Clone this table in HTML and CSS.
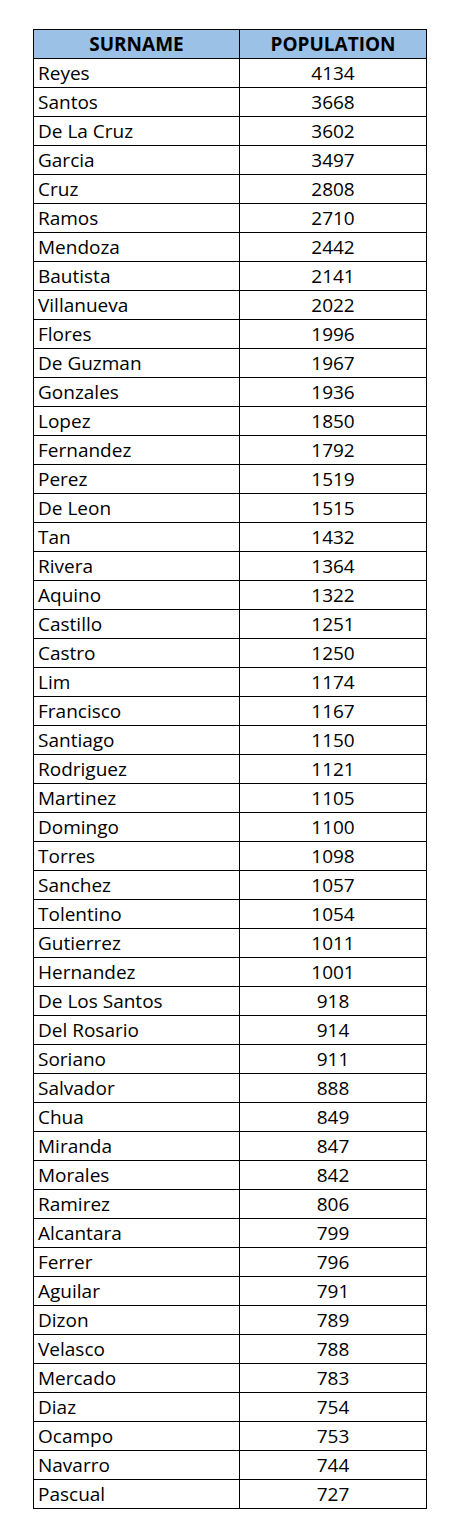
FILE: index.html
```html
<!DOCTYPE html>
<html>
<head>
<meta charset="utf-8">
<link rel="stylesheet" href="styles.css">
</head>
<body>
<table class="sheet">
<colgroup><col class="c1"><col class="c2"></colgroup>
<thead><tr><th>SURNAME</th><th>POPULATION</th></tr></thead>
<tbody>
<tr><td>Reyes</td><td>4134</td></tr>
<tr><td>Santos</td><td>3668</td></tr>
<tr><td>De La Cruz</td><td>3602</td></tr>
<tr><td>Garcia</td><td>3497</td></tr>
<tr><td>Cruz</td><td>2808</td></tr>
<tr><td>Ramos</td><td>2710</td></tr>
<tr><td>Mendoza</td><td>2442</td></tr>
<tr><td>Bautista</td><td>2141</td></tr>
<tr><td>Villanueva</td><td>2022</td></tr>
<tr><td>Flores</td><td>1996</td></tr>
<tr><td>De Guzman</td><td>1967</td></tr>
<tr><td>Gonzales</td><td>1936</td></tr>
<tr><td>Lopez</td><td>1850</td></tr>
<tr><td>Fernandez</td><td>1792</td></tr>
<tr><td>Perez</td><td>1519</td></tr>
<tr><td>De Leon</td><td>1515</td></tr>
<tr><td>Tan</td><td>1432</td></tr>
<tr><td>Rivera</td><td>1364</td></tr>
<tr><td>Aquino</td><td>1322</td></tr>
<tr><td>Castillo</td><td>1251</td></tr>
<tr><td>Castro</td><td>1250</td></tr>
<tr><td>Lim</td><td>1174</td></tr>
<tr><td>Francisco</td><td>1167</td></tr>
<tr><td>Santiago</td><td>1150</td></tr>
<tr><td>Rodriguez</td><td>1121</td></tr>
<tr><td>Martinez</td><td>1105</td></tr>
<tr><td>Domingo</td><td>1100</td></tr>
<tr><td>Torres</td><td>1098</td></tr>
<tr><td>Sanchez</td><td>1057</td></tr>
<tr><td>Tolentino</td><td>1054</td></tr>
<tr><td>Gutierrez</td><td>1011</td></tr>
<tr><td>Hernandez</td><td>1001</td></tr>
<tr><td>De Los Santos</td><td>918</td></tr>
<tr><td>Del Rosario</td><td>914</td></tr>
<tr><td>Soriano</td><td>911</td></tr>
<tr><td>Salvador</td><td>888</td></tr>
<tr><td>Chua</td><td>849</td></tr>
<tr><td>Miranda</td><td>847</td></tr>
<tr><td>Morales</td><td>842</td></tr>
<tr><td>Ramirez</td><td>806</td></tr>
<tr><td>Alcantara</td><td>799</td></tr>
<tr><td>Ferrer</td><td>796</td></tr>
<tr><td>Aguilar</td><td>791</td></tr>
<tr><td>Dizon</td><td>789</td></tr>
<tr><td>Velasco</td><td>788</td></tr>
<tr><td>Mercado</td><td>783</td></tr>
<tr><td>Diaz</td><td>754</td></tr>
<tr><td>Ocampo</td><td>753</td></tr>
<tr><td>Navarro</td><td>744</td></tr>
<tr><td>Pascual</td><td>727</td></tr>
</tbody>
</table>
</body>
</html>
```
FILE: styles.css
```css
html, body {
  margin: 0;
  padding: 0;
  background: #ffffff;
}
body {
  padding: 29px 0 0 33px;
  font-family: "Open Sans", "Liberation Sans", sans-serif;
  color: #000000;
}
.sheet {
  border-collapse: collapse;
  table-layout: fixed;
  width: 393px;
}
.c1 { width: 206px; }
.c2 { width: 187px; }
.sheet th,
.sheet td {
  border: 1px solid #000000;
  height: 29px;
  padding: 0 4px 2px 4px;
  box-sizing: border-box;
  font-size: 19px;
  line-height: 24px;
  vertical-align: bottom;
  white-space: nowrap;
  overflow: hidden;
}
.sheet th {
  background: #9bc2e6;
  font-weight: 700;
  text-align: center;
}
.sheet td:first-child { text-align: left; }
.sheet td:last-child { text-align: center; }
```
